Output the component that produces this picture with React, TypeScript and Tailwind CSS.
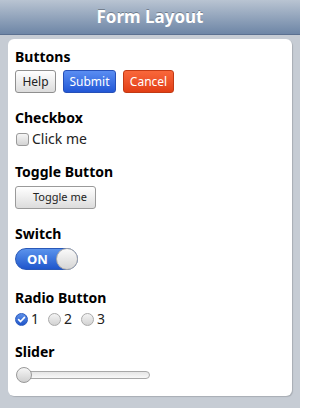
import React from 'react'

function Heading({ children, className = '' }: { children: React.ReactNode; className?: string }) {
  return <h3 className={`text-[14px] leading-[18px] font-bold text-black ${className}`}>{children}</h3>
}

function Radio({ checked, label }: { checked?: boolean; label: string }) {
  return (
    <label className="flex items-center">
      {checked ? (
        <span className="flex h-[13px] w-[13px] items-center justify-center rounded-full bg-gradient-to-b from-[#5d8fe8] to-[#1f55c9] border border-[#2a5bbf]">
          <svg viewBox="0 0 10 10" className="h-[9px] w-[9px]">
            <path d="M1.8 5.2 L4 7.3 L8.3 2.6" fill="none" stroke="white" strokeWidth="1.8" strokeLinecap="round" strokeLinejoin="round" />
          </svg>
        </span>
      ) : (
        <span className="h-[13px] w-[13px] rounded-full bg-gradient-to-b from-[#f4f4f4] to-[#d2d2d2] border border-[#aaa]" />
      )}
      <span className="ml-[3px] text-[14px] leading-[18px] text-[#222]">{label}</span>
    </label>
  )
}

export default function App() {
  return (
    <div className="w-[300px] h-[408px] bg-[#c6ccd4] font-['Noto_Sans','Open_Sans',sans-serif] overflow-hidden">
      <div className="h-[35px] flex items-center justify-center bg-gradient-to-b from-[#b9c4d2] to-[#6e86a6] border-b border-[#5b7090]">
        <h1 className="text-[17px] font-bold text-white [text-shadow:0_-1px_0_rgba(0,0,0,0.3)]">Form Layout</h1>
      </div>

      <div className="mx-[8px] mt-[4px] h-[357px] rounded-[6px] bg-white px-[7px] pt-[9px] shadow-[1px_1px_1px_rgba(0,0,0,0.15)]">
        <Heading>Buttons</Heading>
        <div className="mt-[4px] flex gap-[7px]">
          <button className="h-[23px] w-[41px] rounded-[3px] border border-[#8f8f8f] bg-gradient-to-b from-white to-[#dcdcdc] text-[12px] text-[#222]">
            Help
          </button>
          <button className="h-[23px] w-[53px] rounded-[3px] border border-[#2650b8] bg-gradient-to-b from-[#5a8df2] to-[#2257d6] text-[12px] text-white">
            Submit
          </button>
          <button className="h-[23px] w-[51px] rounded-[3px] border border-[#c23a14] bg-gradient-to-b from-[#f9673a] to-[#e23e14] text-[12px] text-white">
            Cancel
          </button>
        </div>

        <Heading className="mt-[16px]">Checkbox</Heading>
        <label className="mt-[3px] flex items-center">
          <span className="ml-px h-[13px] w-[13px] rounded-[3px] border border-[#9a9a9a] bg-gradient-to-b from-[#f6f6f6] to-[#d4d4d4]" />
          <span className="ml-[3px] text-[14px] leading-[18px] text-[#222]">Click me</span>
        </label>

        <Heading className="mt-[15px]">Toggle Button</Heading>
        <button className="mt-[5px] h-[23px] w-[81px] rounded-[3px] border border-[#9a9a9a] bg-gradient-to-b from-white to-[#dcdcdc] pl-[17px] text-left text-[11px] text-[#222]">
          Toggle me
        </button>

        <Heading className="mt-[16px]">Switch</Heading>
        <div className="mt-[5px] relative h-[22px] w-[63px] rounded-full bg-gradient-to-b from-[#5b93ec] to-[#1f56cc] border border-[#2a59b8]">
          <span className="absolute left-[11px] top-0 text-[13px] leading-[20px] font-bold text-white">ON</span>
          <span className="absolute right-[-1px] top-[-1px] h-[22px] w-[22px] rounded-full border border-[#a8a8a8] bg-gradient-to-b from-[#fafafa] to-[#d6d6d6]" />
        </div>

        <Heading className="mt-[19px]">Radio Button</Heading>
        <div className="mt-[3px] flex items-center gap-[9px]">
          <Radio checked label="1" />
          <Radio label="2" />
          <Radio label="3" />
        </div>

        <Heading className="mt-[15px]">Slider</Heading>
        <div className="mt-[6px] relative h-[16px] w-[135px]">
          <div className="absolute left-[8px] right-0 top-[4px] h-[8px] rounded-full border border-[#a8a8a8] bg-gradient-to-b from-[#e6e6e6] to-[#f8f8f8]" />
          <div className="absolute left-px top-0 h-[16px] w-[16px] rounded-full border border-[#999] bg-gradient-to-b from-[#f6f6f6] to-[#cfcfcf]" />
        </div>
      </div>
    </div>
  )
}
